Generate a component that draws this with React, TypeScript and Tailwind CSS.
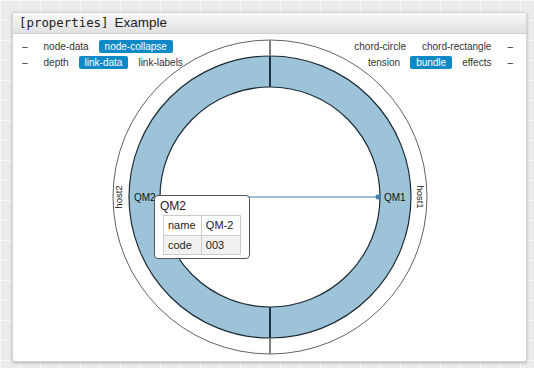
import React from 'react';

const FONT = { fontFamily: '"Liberation Sans", Arial, sans-serif' };

type Item = { label: string; active?: boolean };

const leftRows: Item[][] = [
  [{ label: '–' }, { label: 'node-data' }, { label: 'node-collapse', active: true }],
  [{ label: '–' }, { label: 'depth' }, { label: 'link-data', active: true }, { label: 'link-labels' }],
];

const rightRows: Item[][] = [
  [{ label: 'chord-circle' }, { label: 'chord-rectangle' }, { label: '–' }],
  [{ label: 'tension' }, { label: 'bundle', active: true }, { label: 'effects' }, { label: '–' }],
];

function MenuRow({ items, right }: { items: Item[]; right?: boolean }) {
  return (
    <div className={`flex h-[16px] items-center gap-[4px] ${right ? 'justify-end' : ''}`}>
      {items.map((it, i) => (
        <span
          key={i}
          className={
            it.active
              ? 'rounded-[2px] bg-[#0e89c7] px-[6px] leading-[13px] text-white'
              : 'px-[6px] leading-[13px] text-[#333]'
          }
        >
          {it.label}
        </span>
      ))}
    </div>
  );
}

function Chord() {
  const cx = 257;
  const cy = 163;
  return (
    <svg width="513" height="327" className="block" style={FONT}>
      <circle cx={cx} cy={cy} r={157} fill="none" stroke="#3a3a3a" strokeWidth={0.8} />
      <circle cx={cx} cy={cy} r={125.5} fill="none" stroke="#9cc3d8" strokeWidth={31} />
      <circle cx={cx} cy={cy} r={141} fill="none" stroke="#1d2a33" strokeWidth={1.2} />
      <circle cx={cx} cy={cy} r={110} fill="none" stroke="#1d2a33" strokeWidth={1.2} />
      <line x1={cx} y1={cy - 157} x2={cx} y2={cy - 141} stroke="#808080" strokeWidth={2} />
      <line x1={cx} y1={cy - 141} x2={cx} y2={cy - 110} stroke="#1f3442" strokeWidth={2} />
      <line x1={cx} y1={cy + 110} x2={cx} y2={cy + 141} stroke="#1f3442" strokeWidth={2} />
      <line x1={cx} y1={cy + 141} x2={cx} y2={cy + 157} stroke="#808080" strokeWidth={2} />
      <line x1={cx - 110} y1={cy} x2={cx + 108} y2={cy} stroke="#78a9c8" strokeWidth={1.5} />
      <circle cx={cx + 108} cy={cy} r={2.5} fill="#3f7fa9" />
      <text x={121} y={cy + 3.5} fontSize={10} fill="#111">QM2</text>
      <text x={371} y={cy + 3.5} fontSize={10} fill="#111">QM1</text>
      <text x={0} y={0} fontSize={9.5} fill="#111" textAnchor="middle" transform={`translate(109 ${cy}) rotate(-90)`}>
        host2
      </text>
      <text x={0} y={0} fontSize={9.5} fill="#111" textAnchor="middle" transform={`translate(404 ${cy}) rotate(90)`}>
        host1
      </text>
    </svg>
  );
}

export default function App() {
  return (
    <div
      className="h-[368px] w-[534px] overflow-hidden bg-[#ebebeb] bg-[linear-gradient(#f7f7f7_1px,transparent_1px),linear-gradient(90deg,#f7f7f7_1px,transparent_1px)] bg-[size:20px_20px] pl-[12px] pt-[12px]"
      style={FONT}
    >
      <div className="flex h-[350px] w-[515px] flex-col overflow-hidden rounded-[3px] border border-[#d4d4d4] bg-white shadow-[0_1px_3px_rgba(0,0,0,0.25)]">
        {/* Header */}
        <div className="flex h-[21px] shrink-0 items-center border-b border-[#cfcfcf] bg-[linear-gradient(#f9f9f9,#e1e1e1)] pl-[6px] text-[13.5px] text-[#222]">
          <span className="text-[12.4px]" style={{ fontFamily: '"DejaVu Sans Mono", monospace' }}>
            [properties]
          </span>
          <span className="ml-[6px]">Example</span>
        </div>

        {/* Body */}
        <div className="relative flex-1">
          <Chord />

          {/* Menu */}
          <div className="absolute left-0 right-0 top-[4px] flex justify-between pl-[3px] pr-[7px] text-[10px]">
            <div className="flex flex-col">
              {leftRows.map((r, i) => (
                <MenuRow key={i} items={r} />
              ))}
            </div>
            <div className="flex flex-col items-end">
              {rightRows.map((r, i) => (
                <MenuRow key={i} items={r} right />
              ))}
            </div>
          </div>

          {/* Tooltip */}
          <div className="absolute left-[141px] top-[161px] w-[96px] rounded-[4px] border border-[#555] bg-white px-[8px] pb-[3px] pt-[1px] text-[#222]">
            <div className="-ml-[3px] text-[12px] leading-[18px]">QM2</div>
            <table className="border-collapse text-[11px]">
              <tbody>
                <tr>
                  <td className="h-[20px] w-[38px] border border-[#ccc] px-[4px]">name</td>
                  <td className="h-[20px] w-[40px] border border-[#ccc] px-[4px]">QM-2</td>
                </tr>
                <tr className="bg-[#f1f1f1]">
                  <td className="h-[19px] border border-[#ccc] px-[4px]">code</td>
                  <td className="h-[19px] border border-[#ccc] px-[4px]">003</td>
                </tr>
              </tbody>
            </table>
          </div>
        </div>
      </div>
    </div>
  );
}
